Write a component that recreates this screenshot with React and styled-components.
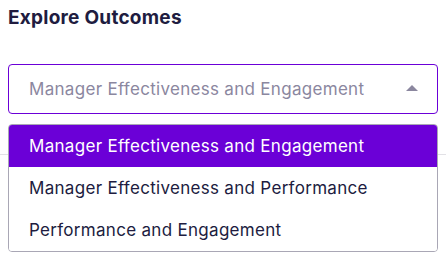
import React from 'react';
import styled, { createGlobalStyle } from 'styled-components';

const Global = createGlobalStyle`
  html, body {
    margin: 0;
    height: 100%;
    background: #ffffff;
    font-family: Inter, "Noto Sans", sans-serif;
  }
`;

const Page = styled.div`
  min-height: 265px;
  padding: 0 8px;
`;

const Title = styled.h2`
  margin: 0;
  padding-top: 6px;
  font-size: 19px;
  line-height: 24px;
  font-weight: 700;
  letter-spacing: 0.25px;
  color: #201c40;
`;

const SelectWrap = styled.div`
  position: relative;
  margin-top: 34px;
`;

const SelectBox = styled.div`
  box-sizing: border-box;
  height: 50px;
  display: flex;
  align-items: center;
  justify-content: space-between;
  padding: 0 19px 0 20px;
  border: 1px solid #6b00d7;
  border-radius: 4px;
  background: #fff;
`;

const Placeholder = styled.span`
  font-size: 17px;
  letter-spacing: 0.3px;
  color: #8b879f;
`;

const Caret = styled.span`
  width: 0;
  height: 0;
  border-left: 6px solid transparent;
  border-right: 6px solid transparent;
  border-bottom: 6px solid #8b879f;
  margin-bottom: 2px;
`;

const Menu = styled.ul`
  position: absolute;
  top: calc(100% + 10px);
  left: 0;
  right: 0;
  margin: 0;
  padding: 0;
  list-style: none;
  border: 1px solid #a9a7b5;
  border-radius: 4px;
  background: #fff;
  overflow: hidden;
  z-index: 2;
`;

const Option = styled.li`
  height: 42px;
  display: flex;
  align-items: center;
  padding-left: 20px;
  font-size: 17px;
  letter-spacing: 0.3px;
  color: ${(p) => (p.$active ? '#ffffff' : '#201c40')};
  background: ${(p) => (p.$active ? '#6b00d7' : '#ffffff')};
`;

const Divider = styled.div`
  height: 1px;
  margin: 40px -8px 0;
  background: #e2e1e6;
`;

const options = [
  'Manager Effectiveness and Engagement',
  'Manager Effectiveness and Performance',
  'Performance and Engagement',
];

export default function App() {
  return (
    <Page>
      <Global />
      <Title>Explore Outcomes</Title>
      <SelectWrap>
        <SelectBox>
          <Placeholder>Manager Effectiveness and Engagement</Placeholder>
          <Caret />
        </SelectBox>
        <Menu>
          {options.map((o, i) => (
            <Option key={o} $active={i === 0}>
              {o}
            </Option>
          ))}
        </Menu>
      </SelectWrap>
      <Divider />
    </Page>
  );
}
